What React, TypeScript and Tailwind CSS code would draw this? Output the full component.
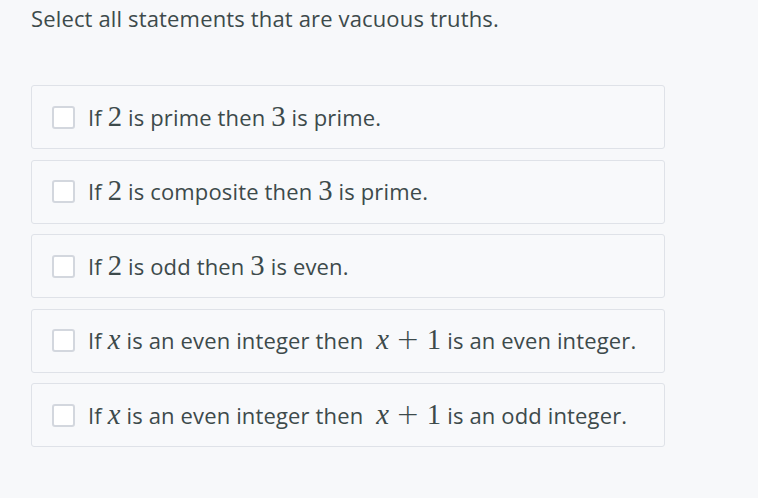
const M = ({ children, italic, className = "" }: { children: React.ReactNode; italic?: boolean; className?: string }) => (
  <span
    className={`text-[1.3em] leading-none ${italic ? "italic" : ""} ${className}`}
    style={{ fontFamily: '"Liberation Serif", "DejaVu Serif", serif' }}
  >
    {children}
  </span>
);

const Plus = () => (
  <span
    className="text-[1.28em] leading-none mx-[7px]"
    style={{ fontFamily: '"DejaVu Sans", sans-serif', fontWeight: 200 }}
  >
    +
  </span>
);

const items: React.ReactNode[] = [
  <>If <M>2</M> is prime then <M>3</M> is prime.</>,
  <>If <M>2</M> is composite then <M>3</M> is prime.</>,
  <>If <M>2</M> is odd then <M>3</M> is even.</>,
  <>If <M italic>x</M> is an even integer then <M italic className="ml-[7px]">x</M><Plus /><M>1</M> is an even integer.</>,
  <>If <M italic>x</M> is an even integer then <M italic className="ml-[7px]">x</M><Plus /><M>1</M> is an odd integer.</>,
];

export default function App() {
  return (
    <div
      className="w-[758px] h-[498px] bg-[#f7f8fa] text-[#3d4a4b] pl-[31px] pt-[3px]"
      style={{ fontFamily: '"Open Sans", "Liberation Sans", sans-serif' }}
    >
      <h1 className="text-[22px] tracking-[0.15px] leading-[30px]">Select all statements that are vacuous truths.</h1>
      <div className="mt-[52px] w-[634px] flex flex-col gap-[10.5px]">
        {items.map((t, i) => (
          <label
            key={i}
            className="h-[64px] flex items-center border border-[#dfe2e8] rounded-[3px] bg-[#f8f9fb] pl-[20px]"
          >
            <span className="w-[23px] h-[23px] shrink-0 border-2 border-[#d3d7de] rounded-[3px] bg-white" />
            <span className="ml-[13px] text-[22px] tracking-[0.15px] whitespace-nowrap">{t}</span>
          </label>
        ))}
      </div>
    </div>
  );
}
